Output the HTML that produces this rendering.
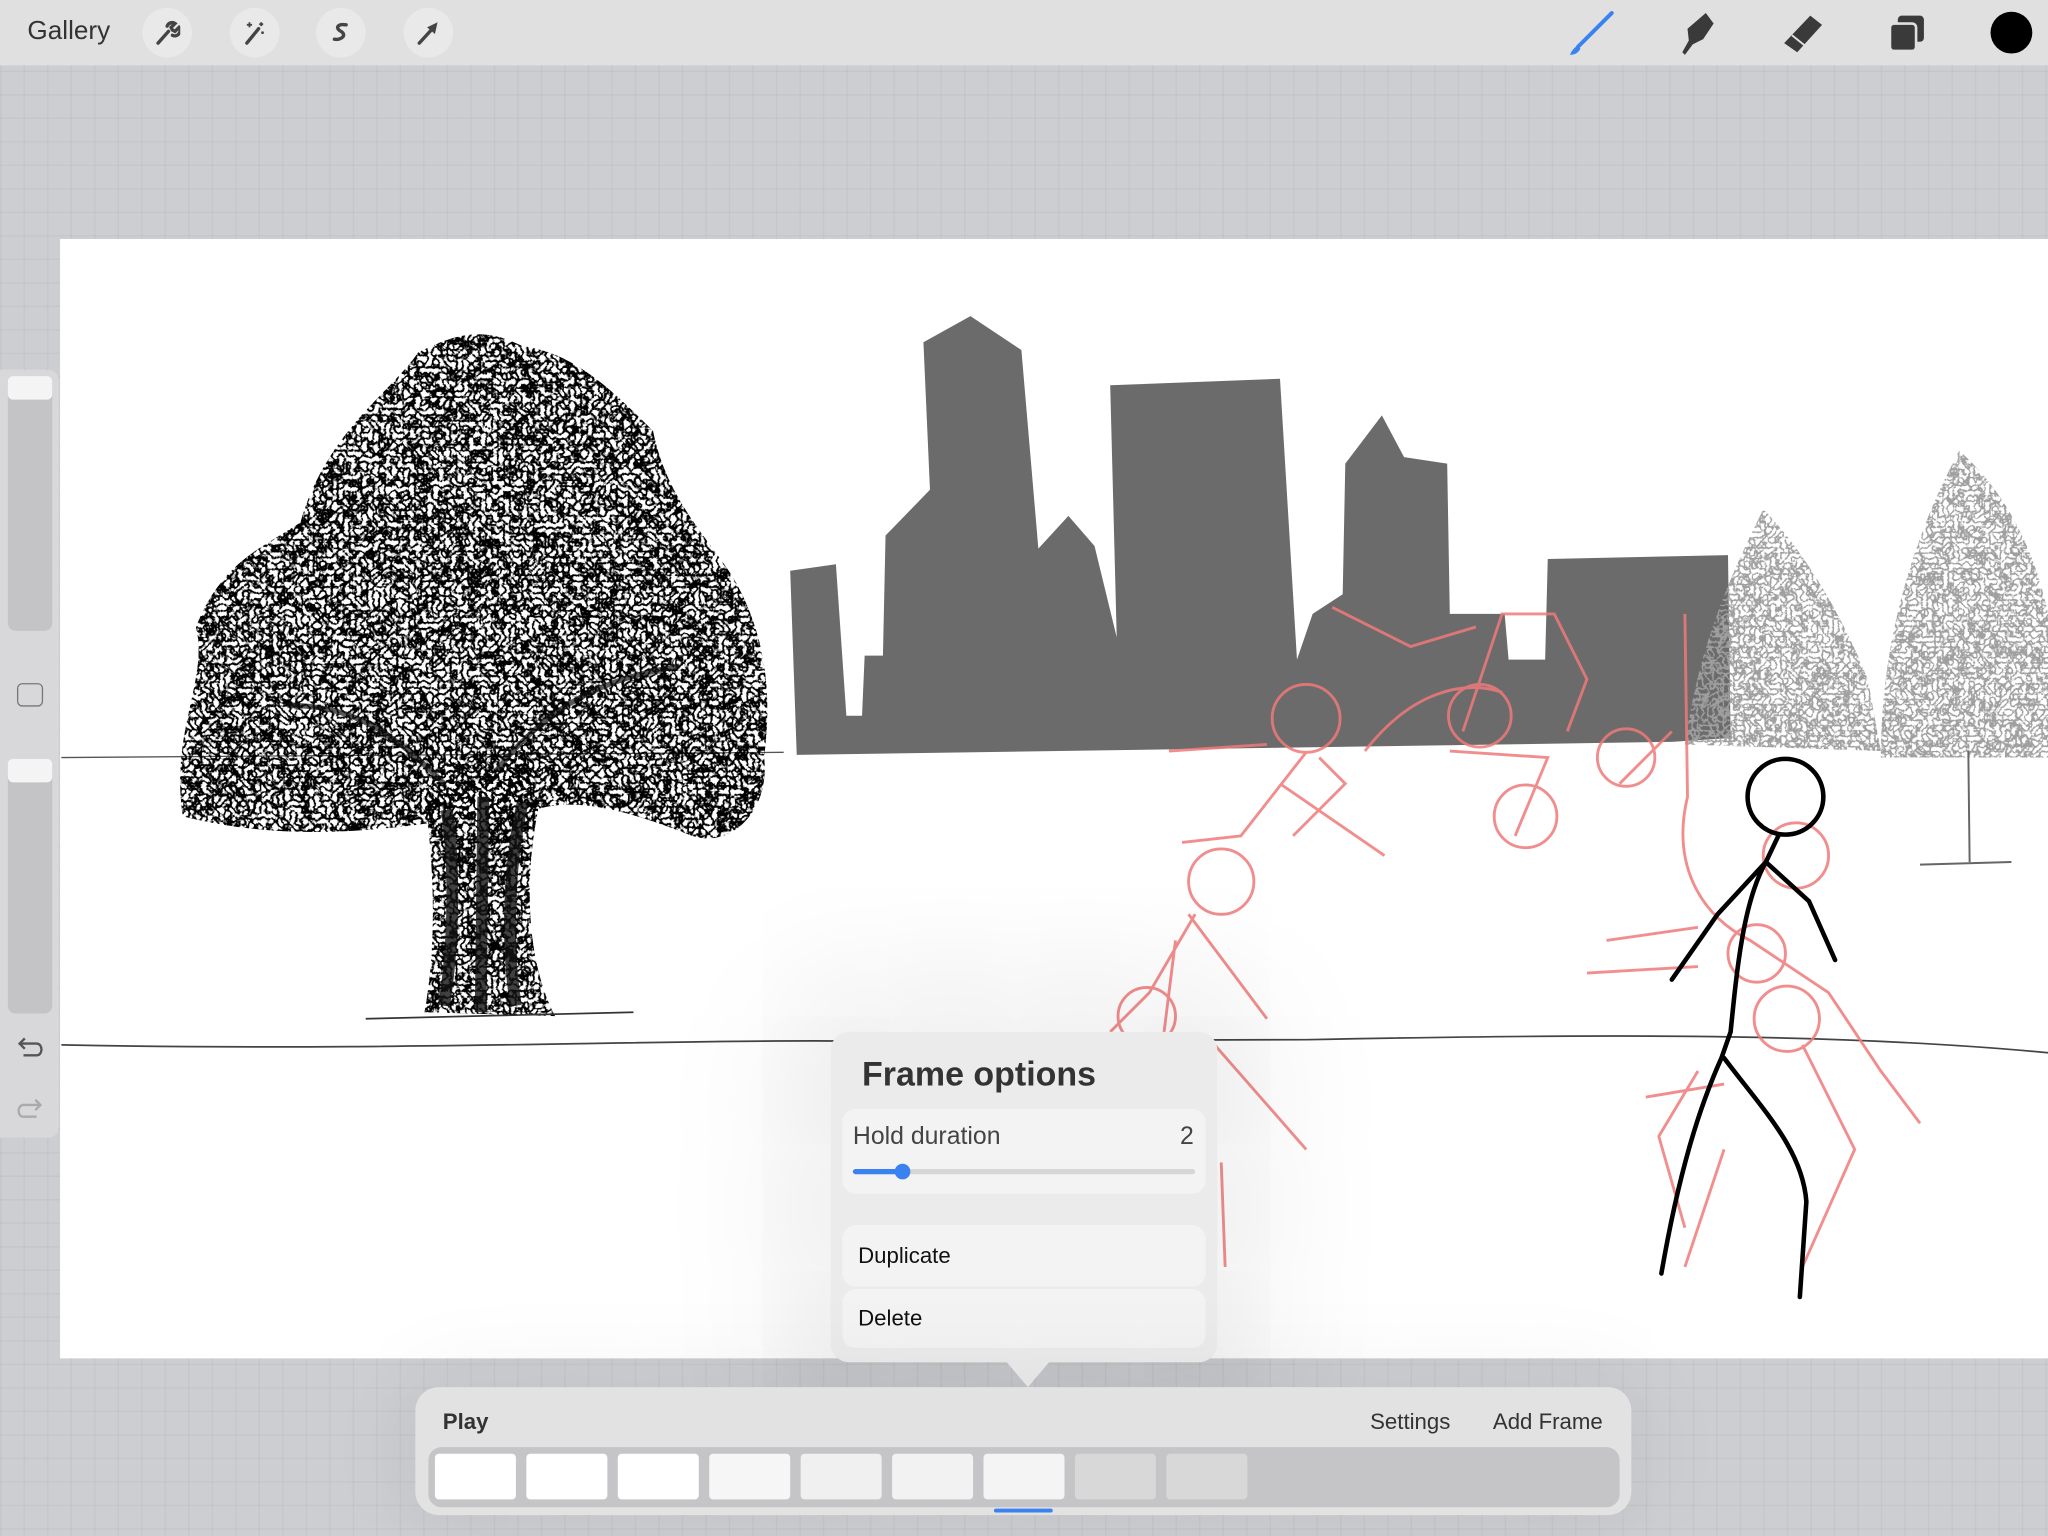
<!DOCTYPE html>
<html><head><meta charset="utf-8"><style>
*{margin:0;padding:0;box-sizing:border-box}
html,body{width:2048px;height:1535px;overflow:hidden;background:#cdced1}
#root{position:absolute;left:0;top:0;width:1568px;height:1176px;transform:scale(1.30612);transform-origin:0 0;font-family:"Liberation Sans",sans-serif;
background-color:#cdced1;background-image:linear-gradient(rgba(0,0,0,0.035) 1px,transparent 1px),linear-gradient(90deg,rgba(0,0,0,0.035) 1px,transparent 1px);background-size:18px 18px}
.top{position:absolute;left:0;top:0;width:1568px;height:50px;background:#e0e0e0}
.gal{position:absolute;left:21px;top:13px;font-size:20px;color:#333}
.tb{position:absolute;top:6px;width:38px;height:38px;border-radius:50%;background:#e9e9e9}
.tb svg{position:absolute;left:9px;top:9px}
.canvas{position:absolute;left:46px;top:183px;width:1522px;height:857px;background:#fff;overflow:hidden}
.side{position:absolute;left:0;top:283px;width:45px;height:588px;background:#d8d8da;border-radius:0 8px 8px 0}
.sl{position:absolute;left:6px;width:34px;background:#c4c4c6;border-radius:6px}
.sl i{position:absolute;left:0;top:0;width:34px;height:18px;background:#f4f4f4;border-radius:4px}
.pop{position:absolute;left:636px;top:790px;width:296px;height:253px;background:#ebebeb;border-radius:14px;box-shadow:0 0 140px 40px rgba(0,0,0,0.08)}
.pop h1{position:absolute;left:24px;top:17px;font-size:26px;font-weight:bold;color:#333}
.row{position:absolute;left:9px;width:278px;background:#f3f3f3;border-radius:10px}
.arrow{position:absolute;left:770px;top:1042px;width:0;height:0;border-left:17px solid transparent;border-right:17px solid transparent;border-top:20px solid #ebebeb}
.panel{position:absolute;left:318px;top:1062px;width:931px;height:98px;background:#e2e2e2;border-radius:18px;box-shadow:0 0 80px rgba(0,0,0,0.08)}
.strip{position:absolute;left:10px;top:46px;width:912px;height:46px;background:#c5c5c7;border-radius:10px}
.th{position:absolute;top:5px;width:62px;height:35px;background:#fff;border-radius:3px}
</style></head><body><div id="root">
<div class="top">
<div class="gal">Gallery</div>
<div class="tb" style="left:109px"><svg width="20" height="20" viewBox="0 0 20 20"><path d="M3 18 L11 9 M10 5 a4 4 0 0 1 6 -2 l-3 3 1 2 2 1 3-3 a4 4 0 0 1-5 6" stroke="#444" stroke-width="2.6" fill="none" stroke-linecap="round"/></svg></div>
<div class="tb" style="left:176px"><svg width="20" height="20" viewBox="0 0 20 20"><path d="M4 18 L13 7" stroke="#444" stroke-width="2.6" stroke-linecap="round"/><path d="M6 2v4M4 4h4M15 2v3M13.5 3.5h3M16 9v2M15 10h2" stroke="#444" stroke-width="1.4"/></svg></div>
<div class="tb" style="left:242px"><svg width="20" height="20" viewBox="0 0 20 20"><path d="M14 4 C8 3 5 6 10 9 C15 12 10 16 5 15" stroke="#444" stroke-width="2.6" fill="none" stroke-linecap="round"/></svg></div>
<div class="tb" style="left:309px"><svg width="20" height="20" viewBox="0 0 20 20"><path d="M3 18 L14 6" stroke="#444" stroke-width="2.6" stroke-linecap="round"/><path d="M17 2 L9 6 L15 11 Z" fill="#444"/></svg></div>
<svg style="position:absolute;left:1198px;top:8px" width="40" height="36" viewBox="0 0 40 36"><path d="M36 2 L10 28" stroke="#3a82f0" stroke-width="3" stroke-linecap="round"/><path d="M10 27 C6 29 5 32 4 34 C8 34 11 32 12 29Z" fill="#3a82f0"/></svg>
<svg style="position:absolute;left:1282px;top:8px" width="34" height="36" viewBox="0 0 34 36"><path d="M24 2 L30 10 L22 22 L14 26 L8 34 L6 32 L11 23 L10 14 Z" fill="#3a3a3a"/></svg>
<svg style="position:absolute;left:1362px;top:10px" width="36" height="32" viewBox="0 0 36 32"><path d="M24 2 L33 9 L14 30 L4 23 Z" fill="#3a3a3a"/><path d="M10 17 L20 25" stroke="#e0e0e0" stroke-width="1.5"/></svg>
<svg style="position:absolute;left:1445px;top:11px" width="30" height="30" viewBox="0 0 30 30"><rect x="8" y="1" width="20" height="20" rx="3" fill="#3a3a3a"/><rect x="2" y="7" width="20" height="21" rx="3" fill="#3a3a3a" stroke="#e0e0e0" stroke-width="2"/></svg>
<div style="position:absolute;left:1524px;top:9px;width:32px;height:32px;border-radius:50%;background:#000"></div>
</div>

<div class="canvas">
<svg width="1522" height="857" viewBox="46 183 1522 857">
<defs>
<filter id="scr" x="0" y="0" width="100%" height="100%"><feTurbulence type="turbulence" baseFrequency="0.22" numOctaves="2" seed="3"/><feColorMatrix values="0 0 0 0 0  0 0 0 0 0  0 0 0 0 0  0 0 0 -5 1.9"/><feComposite in2="SourceGraphic" operator="in"/></filter>
<filter id="scr2" x="0" y="0" width="100%" height="100%"><feTurbulence type="turbulence" baseFrequency="0.25" numOctaves="2" seed="7"/><feColorMatrix values="0 0 0 0 0.35  0 0 0 0 0.35  0 0 0 0 0.35  0 0 0 -5 1.8"/><feComposite in2="SourceGraphic" operator="in"/></filter>
</defs>
<path d="M47 580 L600 576" stroke="#555" stroke-width="1"/>
<path d="M47 800 C300 805 500 796 640 797 L1000 796 C1200 792 1400 790 1568 806" stroke="#444" stroke-width="1.3" fill="none"/>
<path d="M610 578 L605 437 L640 432 L648 548 L660 548 L662 502 L676 502 L678 410 L712 375 L707 262 L743 242 L782 268 L795 420 L818 395 L838 418 L855 488 L850 295 L980 290 L993 505 L1005 470 L1028 455 L1030 355 L1058 318 L1075 350 L1108 355 L1110 470 L1152 470 L1155 505 L1183 505 L1185 428 L1323 425 L1325 565 L1280 568 Z" fill="#6b6b6b"/>
<!-- tree 1 -->
<path d="M140 625 C130 560 160 520 150 480 C170 430 200 420 230 400 C250 330 300 300 320 270 C350 255 370 250 400 265 C440 270 470 300 500 330 C510 380 540 410 560 440 C590 490 590 540 585 580 C590 620 560 650 530 640 C480 620 440 610 410 620 L330 630 C260 640 200 640 140 625 Z" fill="#111" filter="url(#scr)"/>
<path d="M325 775 C335 720 332 660 325 610 L345 570 L365 600 L400 570 L412 620 C400 680 405 740 425 778 Z" fill="#1e1e1e" filter="url(#scr)"/>
<path d="M340 770 C348 720 348 660 342 620 M395 770 C387 720 390 660 400 615 M368 775 L370 610" stroke="#111" stroke-width="9" fill="none" opacity="0.8"/>
<path d="M280 780 L485 775" stroke="#333" stroke-width="1.3"/>
<path d="M340 600 C300 560 270 540 220 540 M380 590 C420 540 460 520 520 510" stroke="#111" stroke-width="4" fill="none" opacity="0.7"/>
<!-- right trees -->
<path d="M1290 570 C1300 500 1320 450 1350 390 C1380 420 1410 470 1430 520 L1440 575 Z" fill="#555" filter="url(#scr2)"/>
<path d="M1440 580 C1440 500 1460 420 1500 345 C1540 380 1560 430 1568 470 L1568 580 Z" fill="#444" filter="url(#scr2)"/>
<path d="M1507 575 L1508 660 M1470 662 L1540 660" stroke="#666" stroke-width="1.5"/>
<!-- red figures -->
<g stroke="#f07a7a" stroke-width="2.2" fill="none" opacity="0.85">
<circle cx="1000" cy="550" r="26"/><circle cx="1133" cy="548" r="24"/><circle cx="1245" cy="580" r="22"/><circle cx="1168" cy="625" r="24"/><circle cx="935" cy="675" r="25"/><circle cx="878" cy="778" r="22"/><circle cx="1375" cy="655" r="25"/><circle cx="1368" cy="780" r="25"/><circle cx="1345" cy="730" r="22"/>
<path d="M1000 576 L950 640 L905 645 M980 600 L1060 655 M1010 580 L1030 600 L990 640"/>
<path d="M1120 560 L1150 470 L1190 470 L1215 520 L1200 560 M1110 575 L1185 580 L1160 640"/>
<path d="M1020 465 L1080 495 L1130 480 M1045 575 C1080 530 1120 520 1150 530"/>
<path d="M915 700 L880 760 L850 790 M910 700 L970 780 M930 800 L1000 880 M900 720 L890 800 M935 890 L938 970"/>
<path d="M1290 470 L1292 610 C1280 660 1300 700 1340 720 L1400 760 L1440 820 L1470 860 M1230 720 L1300 710 M1215 745 L1300 740 M1380 800 L1420 880 L1380 970 M1300 820 L1270 870 L1290 940 M1260 840 L1320 830 M1320 880 L1290 970"/>
<path d="M895 575 L970 570 M1240 600 L1280 560"/>
</g>
<!-- black figure -->
<g stroke="#000" stroke-width="3.5" fill="none" stroke-linecap="round">
<circle cx="1367" cy="610" r="29"/>
<path d="M1362 639 L1352 660 C1335 690 1330 740 1325 790 L1318 810 C1300 850 1285 900 1272 975 M1352 660 L1315 700 L1280 750 M1352 660 L1385 690 L1405 735 M1320 810 C1350 850 1380 880 1383 920 L1378 993"/>
</g>
</svg>
</div>

<div class="side">
<div class="sl" style="top:5px;height:195px"><i></i></div>
<div style="position:absolute;left:13px;top:240px;width:20px;height:18px;border:1.5px solid #777;border-radius:4px"></div>
<div class="sl" style="top:298px;height:195px"><i></i></div>
<svg style="position:absolute;left:12px;top:511px" width="22" height="18" viewBox="0 0 22 18"><path d="M4 5 L16 5 C21 5 21 14 16 14 L6 14 M7 1 L3 5 L7 9" stroke="#555" stroke-width="1.8" fill="none"/></svg>
<svg style="position:absolute;left:12px;top:558px" width="22" height="18" viewBox="0 0 22 18"><path d="M18 5 L6 5 C1 5 1 14 6 14 L16 14 M15 1 L19 5 L15 9" stroke="#aaa" stroke-width="1.8" fill="none"/></svg>
</div>

<div class="pop">
<h1>Frame options</h1>
<div class="row" style="top:59px;height:65px">
<div style="position:absolute;left:8px;top:11px;font-size:19px;color:#444">Hold duration</div>
<div style="position:absolute;right:9px;top:11px;font-size:19px;color:#444">2</div>
<div style="position:absolute;left:8px;top:46px;width:262px;height:4px;background:#d6d6d6;border-radius:2px"></div>
<div style="position:absolute;left:8px;top:46px;width:38px;height:4px;background:#3a82f0;border-radius:2px"></div>
<div style="position:absolute;left:40px;top:42px;width:12px;height:12px;background:#3a82f0;border-radius:50%"></div>
</div>
<div class="row" style="top:148px;height:47px"><div style="position:absolute;left:12px;top:14px;font-size:17px;color:#111">Duplicate</div></div>
<div class="row" style="top:197px;height:45px"><div style="position:absolute;left:12px;top:13px;font-size:17px;color:#111">Delete</div></div>
</div>
<div class="arrow"></div>

<div class="panel">
<div style="position:absolute;left:21px;top:17px;font-size:17px;font-weight:bold;color:#333">Play</div>
<div style="position:absolute;left:731px;top:17px;font-size:17px;color:#333">Settings</div>
<div style="position:absolute;left:825px;top:17px;font-size:17px;color:#333">Add Frame</div>
<div class="strip">
<div class="th" style="left:5px"></div>
<div class="th" style="left:75px"></div>
<div class="th" style="left:145px"></div>
<div class="th" style="left:215px;background:#f6f6f6"></div>
<div class="th" style="left:285px;background:#f0f0f0"></div>
<div class="th" style="left:355px;background:#f2f2f2"></div>
<div class="th" style="left:425px;background:#f4f4f4"></div>
<div class="th" style="left:495px;background:#d8d8d8"></div>
<div class="th" style="left:565px;background:#d8d8d8"></div>
</div>
<div style="position:absolute;left:443px;top:93px;width:45px;height:3px;background:#3a82f0;border-radius:2px"></div>
</div>
</div></body></html>
